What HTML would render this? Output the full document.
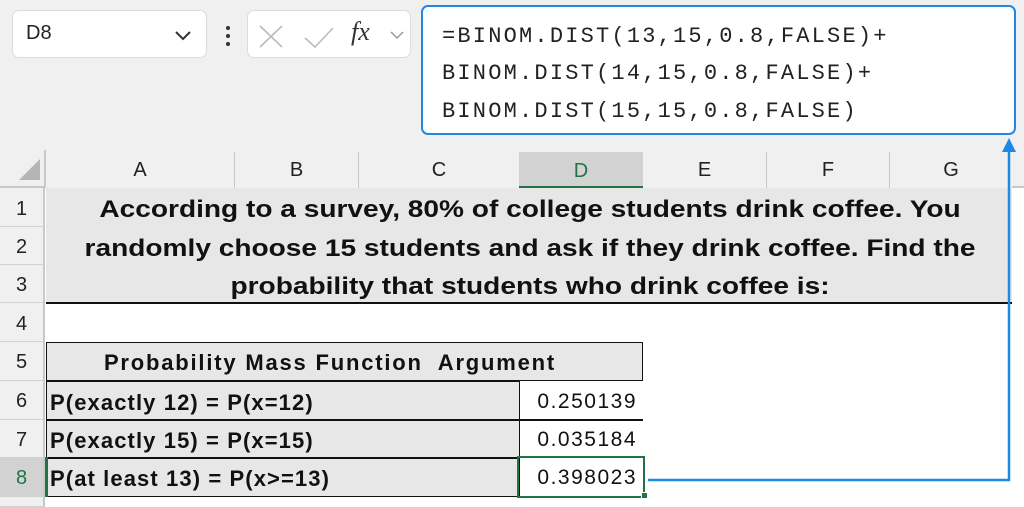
<!DOCTYPE html>
<html><head><meta charset="utf-8"><style>
*{margin:0;padding:0;box-sizing:border-box}
body{width:1024px;height:507px;position:relative;background:#fff;font-family:"Liberation Sans",sans-serif;overflow:hidden}
.a{position:absolute}
.top{left:0;top:0;width:1024px;height:150px;background:#f0f0f0}
.box{background:#fff;border:1px solid #dcdcdc;border-radius:7px}
.ch{top:150px;height:38px;background:#f0f0f0;font-size:20px;color:#222;text-align:center;line-height:40px}
.rh{left:0;width:45px;background:#f0f0f0;border-right:2px solid #c8c8c8;border-bottom:1px solid #d0d0d0;font-size:20px;color:#222;text-align:center}
.vl{top:152px;width:1px;height:34px;background:#c8c8c8}
.mono{font-family:"Liberation Mono",monospace;font-size:22px;letter-spacing:2.2px;color:#222;left:442px}
.t{font-weight:bold;font-size:22px;color:#111;letter-spacing:1.1px;white-space:nowrap}
.n{font-size:21px;letter-spacing:1.5px;color:#111;text-align:right}
</style></head><body>
<div class="a top"></div>
<div class="a box" style="left:12px;top:10px;width:195px;height:48px"></div>
<div class="a" style="left:26px;top:22px;font-size:20px;color:#222">D8</div>
<svg class="a" style="left:173px;top:28px" width="20" height="14"><path d="M3 4 L10 11 L17 4" stroke="#333" stroke-width="2" fill="none"/></svg>
<div class="a" style="left:226px;top:26px;width:4px;height:4px;background:#333;border-radius:2px"></div>
<div class="a" style="left:226px;top:34px;width:4px;height:4px;background:#333;border-radius:2px"></div>
<div class="a" style="left:226px;top:42px;width:4px;height:4px;background:#333;border-radius:2px"></div>
<div class="a box" style="left:247px;top:10px;width:164px;height:48px"></div>
<svg class="a" style="left:255px;top:20px" width="150" height="30"><path d="M5 6 L27 27 M27 6 L5 27" stroke="#bbb" stroke-width="1.6"/><path d="M50 18 L60 27 L78 8" stroke="#bbb" stroke-width="1.6" fill="none"/><path d="M136 12 L142 18 L148 12" stroke="#999" stroke-width="1.5" fill="none"/></svg>
<div class="a" style="left:351px;top:17px;font-family:'Liberation Serif',serif;font-style:italic;font-size:26px;color:#333">fx</div>
<div class="a" style="left:421px;top:5px;width:595px;height:130px;background:#fff;border:2.5px solid #1e88e5;border-radius:7px"></div>
<div class="a mono" style="top:24px">=BINOM.DIST(13,15,0.8,FALSE)+</div>
<div class="a mono" style="top:61px">BINOM.DIST(14,15,0.8,FALSE)+</div>
<div class="a mono" style="top:99px">BINOM.DIST(15,15,0.8,FALSE)</div>

<div class="a" style="left:0;top:150px;width:1024px;height:38px;background:#f0f0f0;border-bottom:2px solid #c8c8c8"></div>
<svg class="a" style="left:14px;top:154px" width="30" height="30"><path d="M26 5 L26 26 L5 26 Z" fill="#b5b5b5"/></svg>
<div class="a" style="left:44px;top:150px;width:2px;height:38px;background:#c8c8c8"></div>
<div class="a ch" style="left:46px;width:188px">A</div>
<div class="a vl" style="left:234px"></div>
<div class="a ch" style="left:235px;width:123px">B</div>
<div class="a vl" style="left:358px"></div>
<div class="a ch" style="left:359px;width:160px">C</div>
<div class="a" style="left:519px;top:152px;width:124px;height:36px;background:#d2d2d2;border-bottom:2px solid #217346;text-align:center;font-size:20px;line-height:38px;color:#217346">D</div>
<div class="a ch" style="left:643px;width:123px">E</div>
<div class="a vl" style="left:766px"></div>
<div class="a ch" style="left:767px;width:122px">F</div>
<div class="a vl" style="left:889px"></div>
<div class="a ch" style="left:890px;width:122px">G</div>

<div class="a rh" style="top:188px;height:39px;line-height:42px">1</div>
<div class="a rh" style="top:227px;height:38px;line-height:40px">2</div>
<div class="a rh" style="top:265px;height:38px;line-height:40px">3</div>
<div class="a rh" style="top:303px;height:39px;line-height:42px">4</div>
<div class="a rh" style="top:342px;height:39px;line-height:40px">5</div>
<div class="a rh" style="top:381px;height:39px;line-height:40px">6</div>
<div class="a rh" style="top:420px;height:38px;line-height:40px">7</div>
<div class="a rh" style="top:458px;height:39px;line-height:40px;background:#d2d2d2;color:#217346">8</div>
<div class="a rh" style="top:497px;height:10px"></div>

<div class="a" style="left:46px;top:188px;width:966px;height:116px;background:#e7e7e7;border-bottom:2px solid #111"></div>
<div class="a" style="left:46px;top:191px;width:966px;text-align:center;font-weight:bold;font-size:24px;line-height:38.5px;color:#111;transform:scaleX(1.17);transform-origin:477px 0;white-space:nowrap">According to a survey, 80% of college students drink coffee. You<br>randomly choose 15 students and ask if they drink coffee. Find the<br>probability that students who drink coffee is:</div>

<div class="a" style="left:46px;top:342px;width:597px;height:155px;background:#e7e7e7;border:1.5px solid #111"></div>
<div class="a" style="left:46px;top:380px;width:597px;height:1.5px;background:#111"></div>
<div class="a" style="left:46px;top:419px;width:597px;height:1.5px;background:#111"></div>
<div class="a" style="left:46px;top:457px;width:597px;height:1.5px;background:#111"></div>
<div class="a" style="left:519px;top:381px;width:124px;height:115px;background:#fff;border-left:1.5px solid #111"></div>
<div class="a" style="left:519px;top:419px;width:124px;height:1.5px;background:#111"></div>
<div class="a t" style="left:60px;top:350px;width:540px;text-align:center;letter-spacing:1.8px">Probability Mass Function&nbsp; Argument</div>
<div class="a t" style="left:50px;top:390px">P(exactly 12) = P(x=12)</div>
<div class="a t" style="left:50px;top:428px">P(exactly 15) = P(x=15)</div>
<div class="a t" style="left:50px;top:466px">P(at least 13) = P(x&gt;=13)</div>
<div class="a n" style="left:515px;top:390px;width:122px">0.250139</div>
<div class="a n" style="left:515px;top:428px;width:122px">0.035184</div>
<div class="a n" style="left:515px;top:466px;width:122px">0.398023</div>
<div class="a" style="left:45px;top:457px;width:3px;height:40px;background:#217346"></div>
<div class="a" style="left:517px;top:456px;width:128px;height:42px;border:2.5px solid #217346"></div>
<div class="a" style="left:641px;top:492px;width:7px;height:7px;background:#217346;border:1px solid #fff"></div>

<svg class="a" style="left:640px;top:130px" width="384" height="360"><path d="M8 350 L369 350 L369 14" stroke="#1e88e5" stroke-width="2.5" fill="none"/><path d="M362 22 L369 8 L376 22 Z" fill="#1e88e5"/></svg>
</body></html>
